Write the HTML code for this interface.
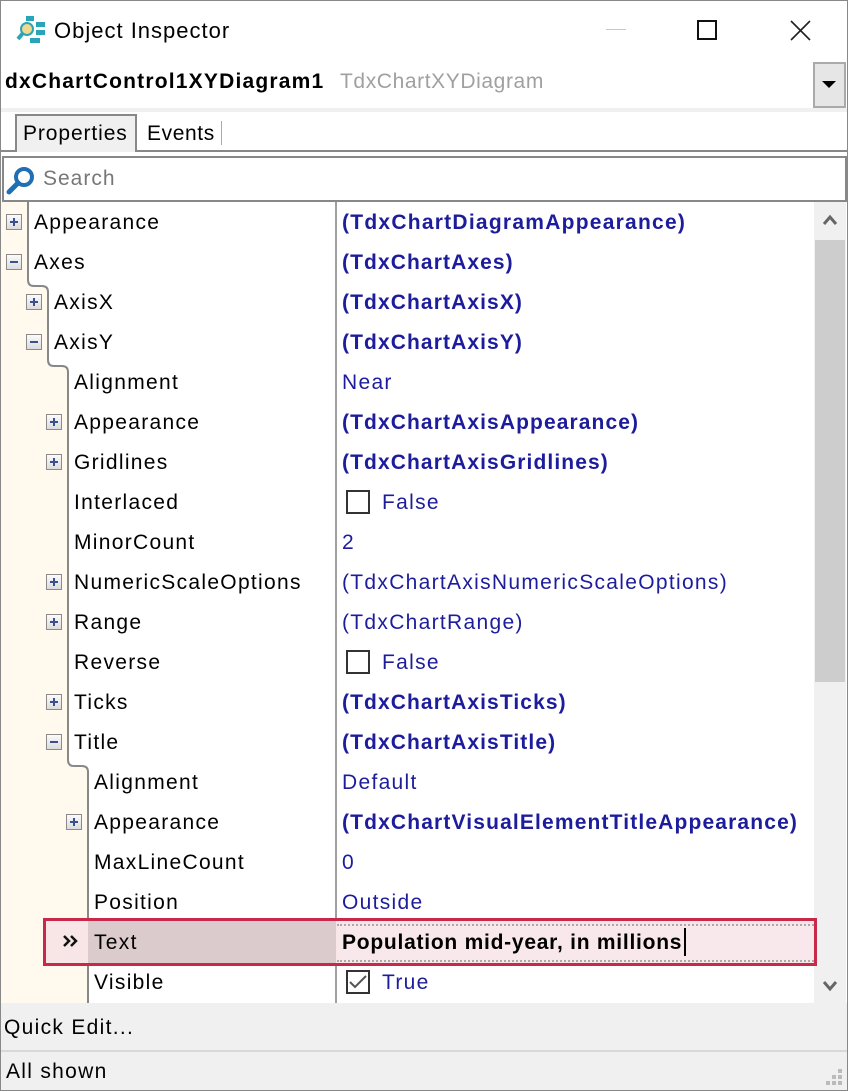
<!DOCTYPE html>
<html><head><meta charset="utf-8"><style>
*{margin:0;padding:0;box-sizing:border-box}
body{width:848px;height:1091px;background:#fff;font-family:"Liberation Sans",sans-serif;font-size:21px;letter-spacing:1.3px;color:#000;position:relative;overflow:hidden}
.a{position:absolute;white-space:nowrap}
.n{position:absolute;line-height:42px;height:40px}
.v{position:absolute;left:342px;line-height:42px;height:40px;color:#1c1c9c}
.b{font-weight:bold;letter-spacing:1.1px}
.pb{position:absolute;width:16px;height:16px;border:1px solid #8a8a8a;background:linear-gradient(#fafafa,#dcdcdc);}
.pb:before{content:"";position:absolute;left:3px;top:6px;width:8px;height:2px;background:#3a4f90}
.pb.p:after{content:"";position:absolute;left:6px;top:3px;width:2px;height:8px;background:#3a4f90}
.cb{position:absolute;left:346px;width:24px;height:24px;border:2px solid #333;background:#fff}
</style></head><body>
<div class="a" style="left:0;top:0;width:848px;height:1091px;border:1px solid #888;z-index:20"></div>
<svg class="a" style="left:16px;top:14px" width="32" height="32" viewBox="0 0 32 32">
<rect x="10" y="2" width="8" height="5" fill="#2aa5b8"/><rect x="20" y="8" width="9" height="5" fill="#2aa5b8"/><rect x="20" y="16" width="9" height="5" fill="#2aa5b8"/><rect x="14" y="24" width="10" height="5" fill="#2aa5b8"/>
<circle cx="11" cy="15" r="6" fill="#f0d890" stroke="#2aa5b8" stroke-width="2"/><line x1="7" y1="19" x2="2" y2="25" stroke="#2aa5b8" stroke-width="4"/>
</svg>
<div class="a" style="left:54px;top:18px;font-size:22px;letter-spacing:1px">Object Inspector</div>
<div class="a" style="left:606px;top:29px;width:20px;height:1px;background:#c8c8c8"></div>
<div class="a" style="left:697px;top:20px;width:20px;height:20px;border:2px solid #111"></div>
<svg class="a" style="left:790px;top:20px" width="21" height="21"><path d="M1 1L20 20M20 1L1 20" stroke="#222" stroke-width="1.6"/></svg>
<div class="a b" style="left:5px;top:70px;font-size:21px;letter-spacing:1.2px">dxChartControl1XYDiagram1</div>
<div class="a" style="left:340px;top:70px;font-size:21px;color:#a0a0a0;letter-spacing:0.6px">TdxChartXYDiagram</div>
<div class="a" style="left:813px;top:62px;width:33px;height:46px;border:2px solid #aaa;background:#e6e6e6"></div>
<svg class="a" style="left:821px;top:80px" width="16" height="10"><path d="M1 1H15L8 8Z" fill="#000"/></svg>
<div class="a" style="left:0;top:108px;width:848px;height:4px;background:#f0f0f0"></div>
<div class="a" style="left:0;top:150px;width:848px;height:2px;background:#888"></div>
<div class="a" style="left:15px;top:114px;width:122px;height:38px;border:2px solid #888;border-bottom:none;background:#f0f0f0"></div>
<div class="a" style="left:23px;top:122px;letter-spacing:0.9px">Properties</div>
<div class="a" style="left:147px;top:122px;letter-spacing:0.6px">Events</div>
<div class="a" style="left:221px;top:121px;width:1px;height:24px;background:#aaa"></div>
<div class="a" style="left:2px;top:156px;width:845px;height:46px;border:2px solid #888"></div>
<svg class="a" style="left:5px;top:165px" width="32" height="32"><circle cx="19" cy="12" r="8" fill="none" stroke="#1f6fb5" stroke-width="4"/><line x1="13" y1="18" x2="4" y2="27" stroke="#1f6fb5" stroke-width="5" stroke-linecap="round"/></svg>
<div class="a" style="left:43px;top:167px;color:#777;letter-spacing:1px">Search</div>
<div class="a" style="left:0;top:202px;width:814px;height:801px;background:#fff"></div>
<svg class="a" style="left:0;top:202px" width="100" height="801">
<path d="M0 0H28V78Q28 84 34 84H42Q48 84 48 90V158Q48 164 54 164H62Q68 164 68 170V558Q68 564 74 564H82Q88 564 88 570V801H0Z" fill="#fff9ee"/>
<path d="M28 0V78Q28 84 34 84H42Q48 84 48 90V158Q48 164 54 164H62Q68 164 68 170V558Q68 564 74 564H82Q88 564 88 570V801" fill="none" stroke="#888" stroke-width="2"/>
</svg>
<div class="a" style="left:335px;top:202px;width:2px;height:801px;background:#a0a0a0"></div>
<div class="a" style="left:814px;top:202px;width:32px;height:801px;background:#f0f0f0"></div>
<div class="a" style="left:815px;top:240px;width:30px;height:442px;background:#cdcdcd"></div>
<svg class="a" style="left:822px;top:214px" width="16" height="12"><path d="M2 10L8 3L14 10" fill="none" stroke="#666" stroke-width="3"/></svg>
<svg class="a" style="left:822px;top:980px" width="16" height="12"><path d="M2 2L8 9L14 2" fill="none" stroke="#666" stroke-width="3"/></svg>

<div class="a" style="left:43px;top:918px;width:774px;height:48px;border:3px solid #c8284a;background:#f8e6e6"></div>
<div class="a" style="left:88px;top:921px;width:248px;height:42px;background:#dccbcd"></div>
<div class="a" style="left:337px;top:924px;width:477px;height:38px;background:#f8e8ec;border-top:2px dotted #aaa;border-bottom:2px dotted #aaa"></div>
<svg class="a" style="left:62px;top:934px" width="18" height="14"><path d="M2 2L7 7L2 12M9 2L14 7L9 12" fill="none" stroke="#111" stroke-width="2.5"/></svg>
<div class="a" style="left:684px;top:928px;width:2px;height:28px;background:#000"></div>

<div class="pb p" style="left:6px;top:214px"></div>
<div class="pb" style="left:6px;top:254px"></div>
<div class="pb p" style="left:26px;top:294px"></div>
<div class="pb" style="left:26px;top:334px"></div>
<div class="pb p" style="left:46px;top:414px"></div>
<div class="pb p" style="left:46px;top:454px"></div>
<div class="pb p" style="left:46px;top:574px"></div>
<div class="pb p" style="left:46px;top:614px"></div>
<div class="pb p" style="left:46px;top:694px"></div>
<div class="pb" style="left:46px;top:734px"></div>
<div class="pb p" style="left:66px;top:814px"></div>

<div class="n" style="left:34px;top:202px">Appearance</div><div class="v b" style="top:202px;letter-spacing:1.25px">(TdxChartDiagramAppearance)</div>
<div class="n" style="left:34px;top:242px">Axes</div><div class="v b" style="top:242px">(TdxChartAxes)</div>
<div class="n" style="left:54px;top:282px">AxisX</div><div class="v b" style="top:282px">(TdxChartAxisX)</div>
<div class="n" style="left:54px;top:322px">AxisY</div><div class="v b" style="top:322px">(TdxChartAxisY)</div>
<div class="n" style="left:74px;top:362px">Alignment</div><div class="v" style="top:362px">Near</div>
<div class="n" style="left:74px;top:402px">Appearance</div><div class="v b" style="top:402px">(TdxChartAxisAppearance)</div>
<div class="n" style="left:74px;top:442px">Gridlines</div><div class="v b" style="top:442px">(TdxChartAxisGridlines)</div>
<div class="n" style="left:74px;top:482px">Interlaced</div><div class="cb" style="top:490px"></div><div class="v" style="left:382px;top:482px">False</div>
<div class="n" style="left:74px;top:522px">MinorCount</div><div class="v" style="top:522px">2</div>
<div class="n" style="left:74px;top:562px">NumericScaleOptions</div><div class="v" style="top:562px;letter-spacing:1.3px">(TdxChartAxisNumericScaleOptions)</div>
<div class="n" style="left:74px;top:602px">Range</div><div class="v" style="top:602px">(TdxChartRange)</div>
<div class="n" style="left:74px;top:642px">Reverse</div><div class="cb" style="top:650px"></div><div class="v" style="left:382px;top:642px">False</div>
<div class="n" style="left:74px;top:682px">Ticks</div><div class="v b" style="top:682px">(TdxChartAxisTicks)</div>
<div class="n" style="left:74px;top:722px">Title</div><div class="v b" style="top:722px">(TdxChartAxisTitle)</div>
<div class="n" style="left:94px;top:762px">Alignment</div><div class="v" style="top:762px">Default</div>
<div class="n" style="left:94px;top:802px">Appearance</div><div class="v b" style="top:802px;letter-spacing:1.15px">(TdxChartVisualElementTitleAppearance)</div>
<div class="n" style="left:94px;top:842px">MaxLineCount</div><div class="v" style="top:842px">0</div>
<div class="n" style="left:94px;top:882px">Position</div><div class="v" style="top:882px">Outside</div>
<div class="n" style="left:94px;top:922px">Text</div><div class="v b" style="top:922px;color:#000;letter-spacing:0.75px">Population mid-year, in millions</div>
<div class="n" style="left:94px;top:962px">Visible</div><div class="cb" style="top:970px"></div>
<svg class="a" style="left:348px;top:974px" width="20" height="16"><path d="M2 8L7 13L18 2" fill="none" stroke="#555" stroke-width="2"/></svg>
<div class="v" style="left:382px;top:962px">True</div>

<div class="a" style="left:0;top:1003px;width:848px;height:88px;background:#f0f0f0"></div>
<div class="a" style="left:4px;top:1016px">Quick Edit...</div>
<div class="a" style="left:0;top:1050px;width:848px;height:2px;background:#d8d8d8"></div>
<div class="a" style="left:6px;top:1060px">All shown</div>
<svg class="a" style="left:826px;top:1069px" width="18" height="18" fill="#bbb"><rect x="12" y="0" width="4" height="4"/><rect x="6" y="6" width="4" height="4"/><rect x="12" y="6" width="4" height="4"/><rect x="0" y="12" width="4" height="4"/><rect x="6" y="12" width="4" height="4"/><rect x="12" y="12" width="4" height="4"/></svg>
</body></html>
